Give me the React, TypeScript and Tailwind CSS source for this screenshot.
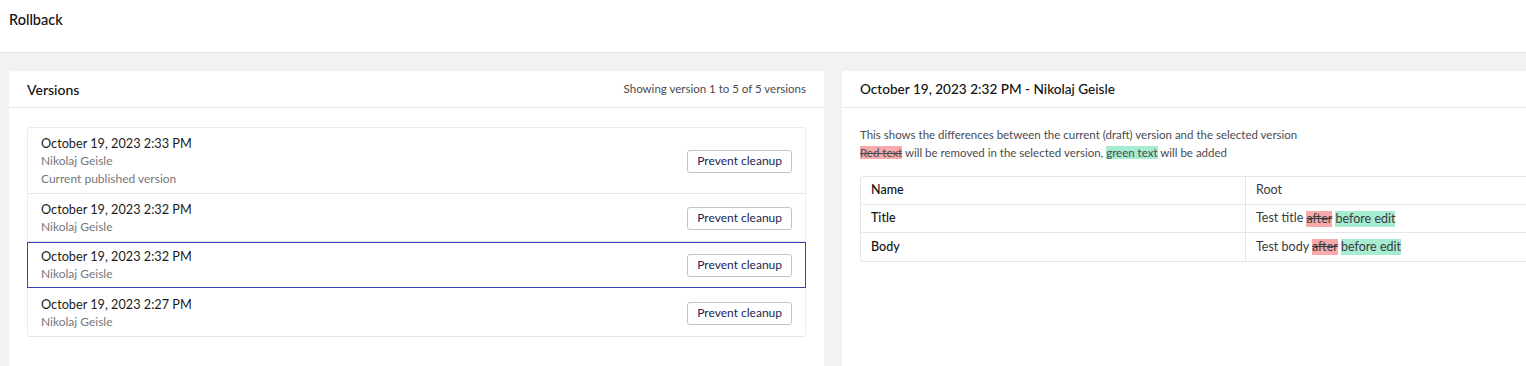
import React from "react";

const versions = [
  { date: "October 19, 2023 2:33 PM", name: "Nikolaj Geisle", current: true },
  { date: "October 19, 2023 2:32 PM", name: "Nikolaj Geisle" },
  { date: "October 19, 2023 2:32 PM", name: "Nikolaj Geisle", selected: true },
  { date: "October 19, 2023 2:27 PM", name: "Nikolaj Geisle" },
];

function Diff({ base }: { base: string }) {
  return (
    <div className="flex items-center px-[10px] text-[#3a3a3e] whitespace-pre">
      <span>{base} </span>
      <span className="bg-[#f8a9a9] line-through leading-[16px]">after</span>
      <span> </span>
      <span className="bg-[#a6ecd0] leading-[16px]">before edit</span>
    </div>
  );
}

export default function App() {
  return (
    <div
      className="w-[1526px] h-[366px] overflow-hidden bg-[#f3f1f2] text-[#1b1b1b]"
      style={{ fontFamily: "Lato, 'Open Sans', sans-serif" }}
    >
      <div className="h-[53px] bg-white border-b border-[#e6e5e6] px-[9px] pt-[11px] text-[14.5px] leading-[18px] font-medium text-[#111]">
        Rollback
      </div>
      <div className="flex gap-[18px] pl-[9px] pt-[18px]">
        <div className="w-[815px] shrink-0 bg-white rounded-[3px] h-[400px]">
          <div className="h-[37px] flex items-center justify-between px-[18px] border-b border-[#e9e9eb]">
            <span className="text-[14px] font-medium text-[#111]">Versions</span>
            <span className="text-[11.5px] text-[#4a4a4f]">Showing version 1 to 5 of 5 versions</span>
          </div>
          <div className="px-[18px] pt-[19px]">
            <div className="border-t border-l border-r border-[#ececee] rounded-[3px]">
              {versions.map((v, i) => (
                <div
                  key={i}
                  className={
                    v.selected
                      ? "flex items-center justify-between pl-[13px] pr-[13px] py-[4px] border border-[#3544b1] -mx-px mb-[1px]"
                      : "flex items-center justify-between pl-[13px] pr-[13px] pt-[6px] pb-[5px] border-b border-[#e4e4e6]"
                  }
                >
                  <div className="flex flex-col">
                    <span className="text-[12.7px] leading-[18px] text-[#1b1b1b]">{v.date}</span>
                    <span className="text-[12px] leading-[18px] text-[#77767a]">{v.name}</span>
                    {v.current && (
                      <span className="text-[12px] leading-[18px] text-[#77767a]">Current published version</span>
                    )}
                  </div>
                  <button className="h-[23px] px-[9px] border border-[#c4c4c7] rounded-[3px] bg-white text-[12px] text-[#1b264f] leading-none">
                    Prevent cleanup
                  </button>
                </div>
              ))}
            </div>
          </div>
        </div>
        <div className="w-[815px] shrink-0 bg-white rounded-[3px] h-[400px]">
          <div className="h-[37px] flex items-center px-[18px] border-b border-[#e9e9eb]">
            <span className="text-[13.6px] font-medium text-[#111]">October 19, 2023 2:32 PM - Nikolaj Geisle</span>
          </div>
          <div className="px-[18px] pt-[18px]">
            <div className="text-[11.5px] leading-[18px] text-[#4a4a4f]">
              This shows the differences between the current (draft) version and the selected version
            </div>
            <div className="text-[11.5px] leading-[18px] text-[#4a4a4f]">
              <span className="bg-[#f8a9a9] line-through text-[#4a4a4f]">Red text</span> will be removed in the selected version,{" "}
              <span className="bg-[#a6ecd0]">green text</span> will be added
            </div>
            <div className="mt-[14px] border border-[#e6e6e8] rounded-[3px] text-[12.5px]">
              <div className="grid grid-cols-[385px_1fr] h-[28px] items-stretch border-b border-[#e6e6e8]">
                <div className="flex items-center px-[10px] border-r border-[#e6e6e8] font-medium text-[#111]">Name</div>
                <div className="flex items-center px-[10px] text-[#3a3a3e]">Root</div>
              </div>
              <div className="grid grid-cols-[385px_1fr] h-[28px] items-stretch border-b border-[#e6e6e8]">
                <div className="flex items-center px-[10px] border-r border-[#e6e6e8] font-medium text-[#111]">Title</div>
                <Diff base="Test title" />
              </div>
              <div className="grid grid-cols-[385px_1fr] h-[28px] items-stretch">
                <div className="flex items-center px-[10px] border-r border-[#e6e6e8] font-medium text-[#111]">Body</div>
                <Diff base="Test body" />
              </div>
            </div>
          </div>
        </div>
      </div>
    </div>
  );
}
